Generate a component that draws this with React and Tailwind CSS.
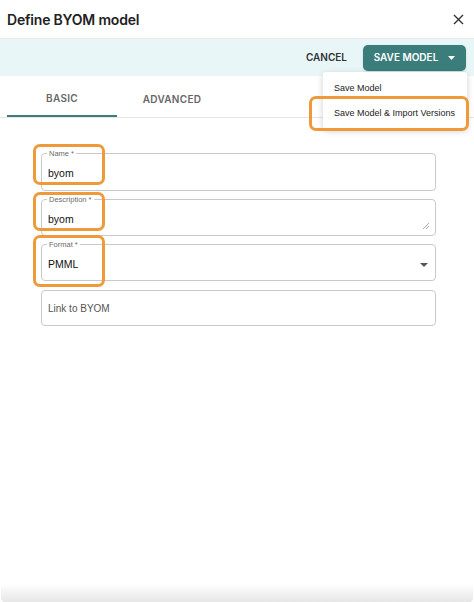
import React from 'react'

const fields = [
  { label: 'Name *', value: 'byom', h: 'h-[42px]', mark: 'top-[-5px] h-[41px]' },
  { label: 'Description *', value: 'byom', h: 'h-[41px]', mark: 'top-[-3px] h-[39px]', resize: true },
  { label: 'Format *', value: 'PMML', h: 'h-[41px]', mark: 'top-[-5px] h-[52px]', select: true },
]

function Field({ f }) {
  return (
    <div className="relative">
      <fieldset className={`${f.h} border border-[#c9c9c9] rounded-[4px] px-[5px] relative`}>
        <legend className="px-[2px] text-[7.5px] leading-[9px] text-[#6b6b6b]">{f.label}</legend>
        <div className="text-[10.5px] mt-[9px] text-[#111] leading-[13px] pl-[1px]">{f.value}</div>
        {f.select && (
          <svg className="absolute right-[7px] top-[14px]" width="8" height="4" viewBox="0 0 8 4">
            <path d="M0 0h8L4 4z" fill="#555" />
          </svg>
        )}
        {f.resize && (
          <svg className="absolute right-[6px] bottom-[6px]" width="6" height="6" viewBox="0 0 6 6">
            <path d="M6 0L0 6M6 3L3 6" stroke="#999" strokeWidth="0.8" />
          </svg>
        )}
      </fieldset>
      <div className={`absolute -left-[8px] ${f.mark} w-[72px] border-[3px] border-[#ef9a3a] rounded-[7px]`} />
    </div>
  )
}

export default function App() {
  return (
    <div className="w-[474px] h-[602px] bg-white relative overflow-hidden flex flex-col" style={{ fontFamily: '"Liberation Sans", Arial, sans-serif' }}>
      {/* Header */}
      <header className="h-[39px] flex items-center justify-between pl-[7px] pr-[10px] border-b border-[#e8e8e8]">
        <h1 className="text-[14px] font-semibold text-[#222] tracking-[-0.2px]" style={{ fontFamily: 'Inter, sans-serif' }}>Define BYOM model</h1>
        <svg width="11" height="11" viewBox="0 0 11 11">
          <path d="M1 1l9 9M10 1l-9 9" stroke="#333" strokeWidth="1.4" />
        </svg>
      </header>

      {/* Toolbar */}
      <div className="h-[37px] bg-[#e8f6f8] flex items-center justify-end pr-[8px] gap-[16px]" style={{ fontFamily: 'Inter, sans-serif' }}>
        <span className="text-[10px] font-semibold text-[#333]">CANCEL</span>
        <button className="w-[103px] h-[26px] rounded-[5px] bg-[#3b7d7b] text-white text-[10px] font-semibold flex items-center justify-center gap-[10px] shadow">
          SAVE MODEL
          <svg width="7" height="4" viewBox="0 0 7 4"><path d="M0 0h7L3.5 4z" fill="#fff" /></svg>
        </button>
      </div>

      {/* Tabs */}
      <div className="flex h-[42px] border-b border-[#e5e5e5] text-[10px] font-semibold text-[#666] tracking-[0.3px]" style={{ fontFamily: 'Inter, sans-serif' }}>
        <div className="ml-[7px] w-[110px] flex items-center justify-center pt-[6px] border-b-2 border-[#3b7d7b]">BASIC</div>
        <div className="w-[110px] flex items-center justify-center pt-[6px]">ADVANCED</div>
      </div>

      {/* Form */}
      <div className="pl-[41px] pr-[38px] pt-[31px] flex flex-col gap-[4px]">
        {fields.map((f) => <Field key={f.label} f={f} />)}
        <div className="h-[36px] mt-[5px] border border-[#c9c9c9] rounded-[4px] flex items-center px-[6px] text-[10px] text-[#555]">Link to BYOM</div>
      </div>

      {/* Bottom shade */}
      <div className="mt-auto h-[18px] mx-[1px] bg-gradient-to-b from-white to-[#e6e6e6] rounded-b-[4px]" />

      {/* Dropdown menu */}
      <div className="absolute left-[323px] top-[72px] w-[144px] h-[57px] bg-white shadow-[0_2px_6px_rgba(0,0,0,0.2)] rounded-[3px] text-[9px] text-[#222]">
        <div className="h-[29px] flex items-center pl-[11px] pt-[5px]">Save Model</div>
        <div className="h-[26px] flex items-center pl-[11px]">Save Model &amp; Import Versions</div>
      </div>
      <div className="absolute left-[309px] top-[96px] w-[160px] h-[35px] border-[3px] border-[#ef9a3a] rounded-[7px]" />
    </div>
  )
}
